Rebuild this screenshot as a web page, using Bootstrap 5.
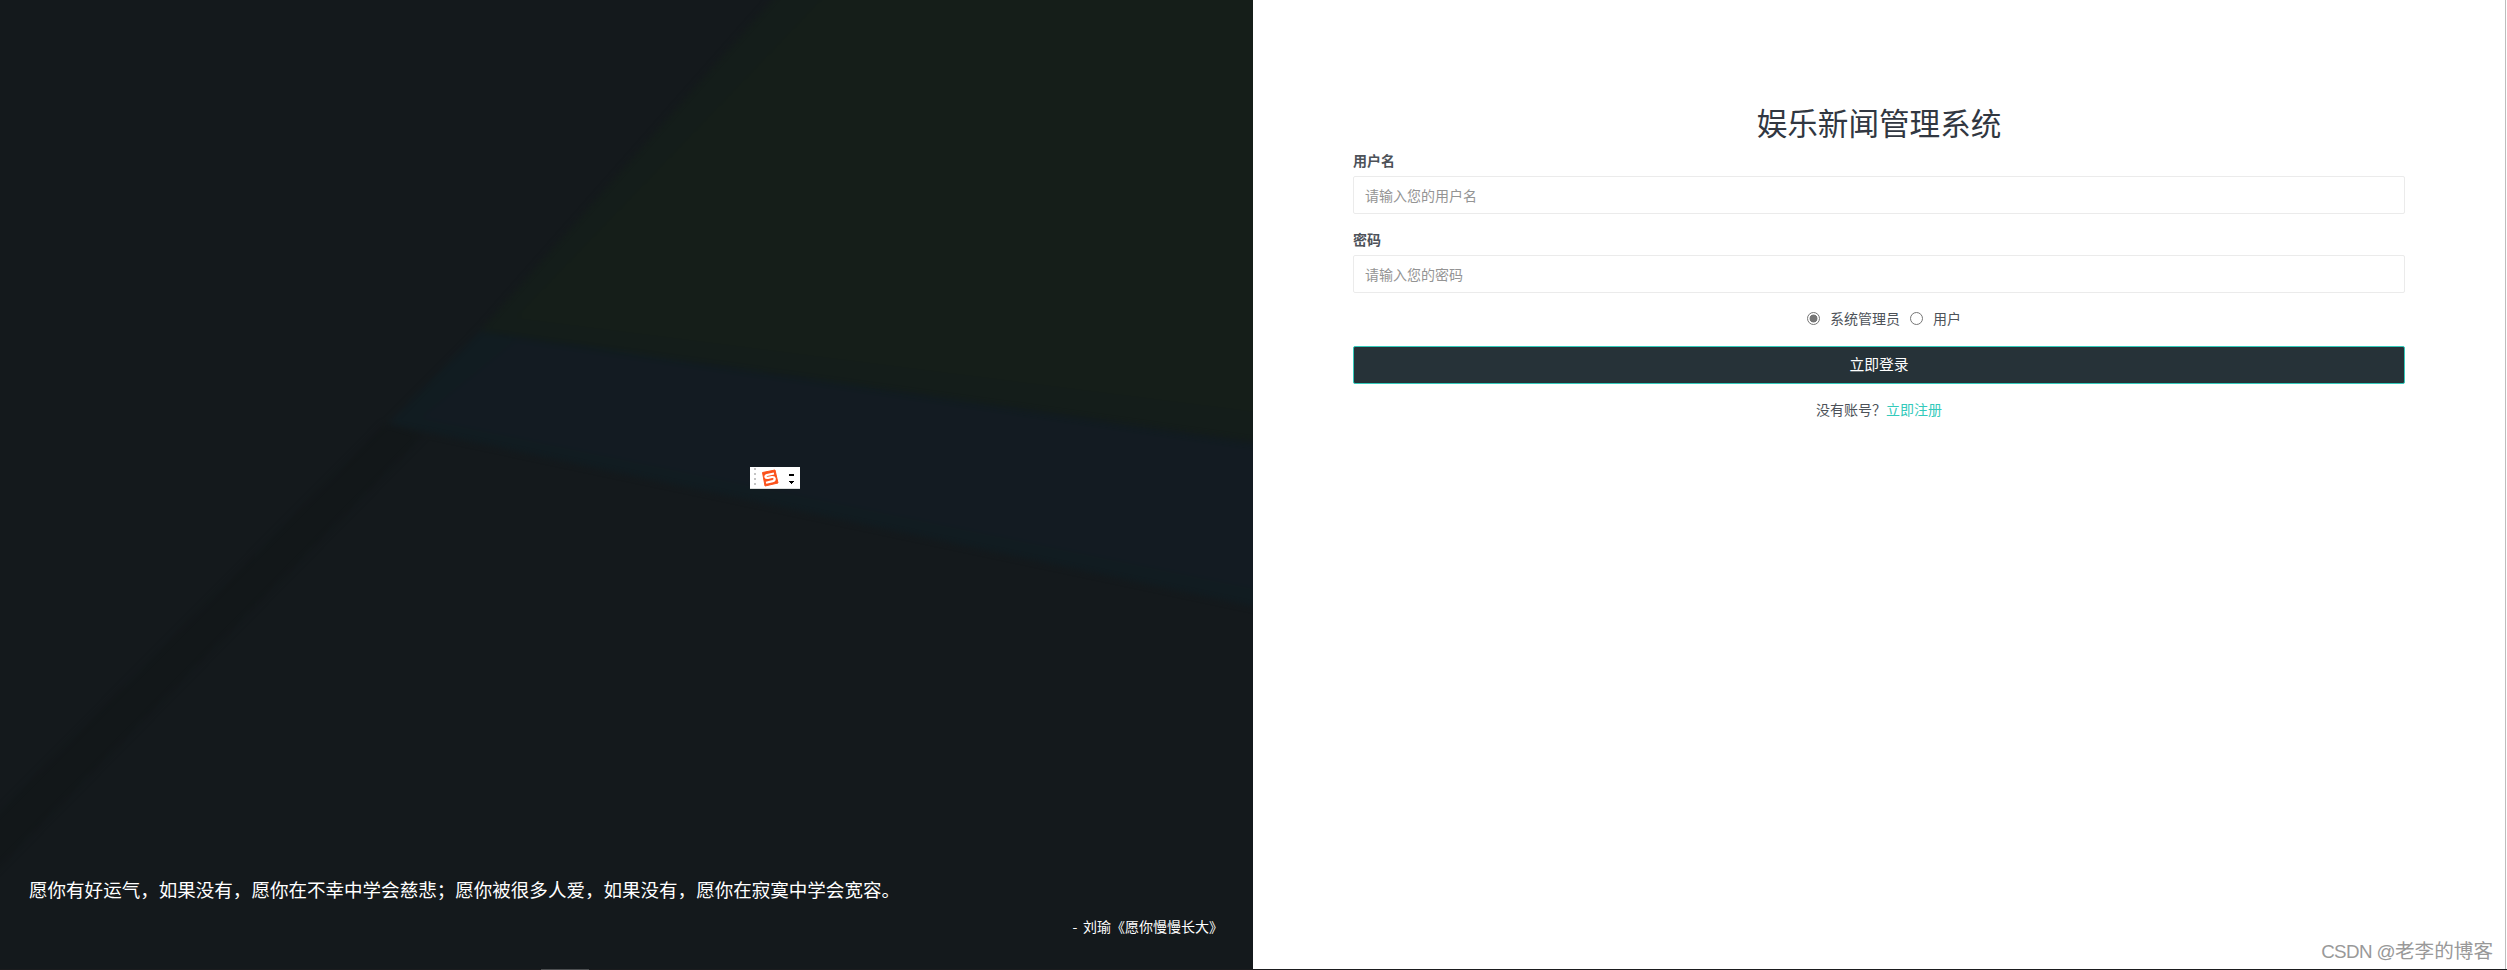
<!DOCTYPE html>
<html lang="zh-CN">
<head>
<meta charset="utf-8">
<title>娱乐新闻管理系统</title>
<link rel="stylesheet" href="https://cdn.jsdelivr.net/npm/bootstrap@5.3.0/dist/css/bootstrap.min.css">
<style>
body{font-family:"Noto Sans CJK SC",sans-serif;font-size:14px;line-height:21px;color:#4d5259;background:#fff}
.screen{height:970px;border-bottom:1px solid #1b1c1e}
.scene{width:1253px;background:#14191c;color:#fff}
.scene-art{inset:0;width:100%;height:100%}
.quote{padding:0 30px 32px 29px}
.quote-text{font-size:18.55px;line-height:28px;margin-bottom:13px}
.quote-author{word-spacing:2.5px}
.login-side{padding:99px 100px 0 100px;border-right:1px solid #bdbdbd;margin-right:1px}
.login-title{font-size:30.6px;line-height:46px;font-weight:400;color:#313741;margin-bottom:5px}
.form-label{font-weight:600;line-height:21px;margin-bottom:5px;display:block}
.form-control{height:38px;font-size:14px;border-color:#ebebeb;border-radius:2px;padding:5px 11px 5px}
.form-control::placeholder{color:#949494}
.field-user{margin-bottom:15px}
.field-pass{margin-bottom:14px}
.role-row{height:22px;margin-bottom:17px;padding-left:10px}
.role-row input{width:13px;height:13px;margin:0 10px 0 0;appearance:none;border:1px solid #767676;border-radius:50%}
.role-row input:checked{background:radial-gradient(circle,#767676 0 3.6px,#fff 4.3px)}
.role-row label+label{margin-left:10px}
.btn-login{height:38px;font-size:14.8px;line-height:22px;padding:6px 7px 8px;color:#fff;background:#263238;border:1px solid #33cabb;border-radius:2px}
.register{margin-top:15px}
.register a{color:#33cabb}
.ime-bar{left:750px;top:467px;width:50px;height:22px}
.watermark{right:14px;bottom:2px;font-size:19.6px;line-height:30px;color:#999}
.watermark .latin{font-family:"Liberation Sans",sans-serif;font-size:18.8px;letter-spacing:-.6px}
.drag-handle{left:541px;bottom:0;width:48px;height:1px;background:#4d4f51}
</style>
</head>
<body>
<main class="screen d-flex position-relative">
  <section class="scene flex-shrink-0 position-relative d-flex flex-column justify-content-end">
    <svg class="scene-art position-absolute" viewBox="0 0 1253 969" preserveAspectRatio="none" aria-hidden="true">
      <defs>
        <filter id="soft" x="-5%" y="-5%" width="110%" height="110%" color-interpolation-filters="sRGB"><feGaussianBlur stdDeviation="3"/></filter>
      </defs>
      <g filter="url(#soft)">
        <path d="M385 424 424 434 -20 886V832Z" fill="#121719"/>
        <path d="M790 -20H1280V445L480 331Z" fill="#141d1a"/>
        <path d="M840 -20H1280V415L515 318Z" fill="#151e19"/>
        <path d="M480 331 1280 447V612L388 424Z" fill="#111c21"/>
        <path d="M515 341 1280 452V594L420 418Z" fill="#131b22"/>
      </g>
    </svg>
    <div class="quote position-relative">
      <p class="quote-text">愿你有好运气，如果没有，愿你在不幸中学会慈悲；愿你被很多人爱，如果没有，愿你在寂寞中学会宽容。</p>
      <p class="quote-author text-end mb-0">- 刘瑜《愿你慢慢长大》</p>
    </div>
  </section>
  <section class="login-side flex-grow-1">
    <h1 class="login-title text-center">娱乐新闻管理系统</h1>
    <form>
      <div class="field-user"><label class="form-label" for="user">用户名</label><input class="form-control" id="user" placeholder="请输入您的用户名"></div>
      <div class="field-pass"><label class="form-label" for="pass">密码</label><input class="form-control" type="password" id="pass" placeholder="请输入您的密码"></div>
      <div class="role-row d-flex justify-content-center align-items-center">
        <label class="d-flex align-items-center"><input type="radio" name="role" checked>系统管理员</label>
        <label class="d-flex align-items-center"><input type="radio" name="role">用户</label>
      </div>
      <button class="btn btn-login w-100 d-block" type="button">立即登录</button>
      <p class="register text-center mb-0">没有账号？<a class="text-decoration-none" href="#">立即注册</a></p>
    </form>
  </section>
  <svg class="ime-bar position-absolute" viewBox="0 0 50 22" aria-hidden="true">
    <path fill="#fff" d="M0 0h50v22H0z"/><path fill="#dcdedd" d="M0 21h50v1H0z"/>
    <path d="M5 1v20" stroke="#c4c4c4" stroke-width="2" stroke-dasharray="2 3"/>
    <path d="M12.500 5.500 25 3 28 16 15 19Z" fill="#fb511b" stroke="#fb511b" stroke-width="1" stroke-linejoin="round"/>
    <path d="M24 6.500 17 8q-2 .6-1.500 2 .5 1.200 2.500.8l4-.8q2.400-.2 2.700 1.500.2 2-2 2.600L16 15.700" fill="none" stroke="#fff" stroke-width="2.200"/>
    <path d="M39 7h5v2h-5zM39 14h5v1h-1v1h-1v1h-1v-1h-1v-1h-1z"/>
  </svg>
  <div class="watermark position-absolute"><span class="latin">CSDN @</span>老李的博客</div>
</main>
<div class="drag-handle position-absolute"></div>
<script src="https://cdn.jsdelivr.net/npm/bootstrap@5.3.0/dist/js/bootstrap.bundle.min.js"></script>
</body>
</html>
